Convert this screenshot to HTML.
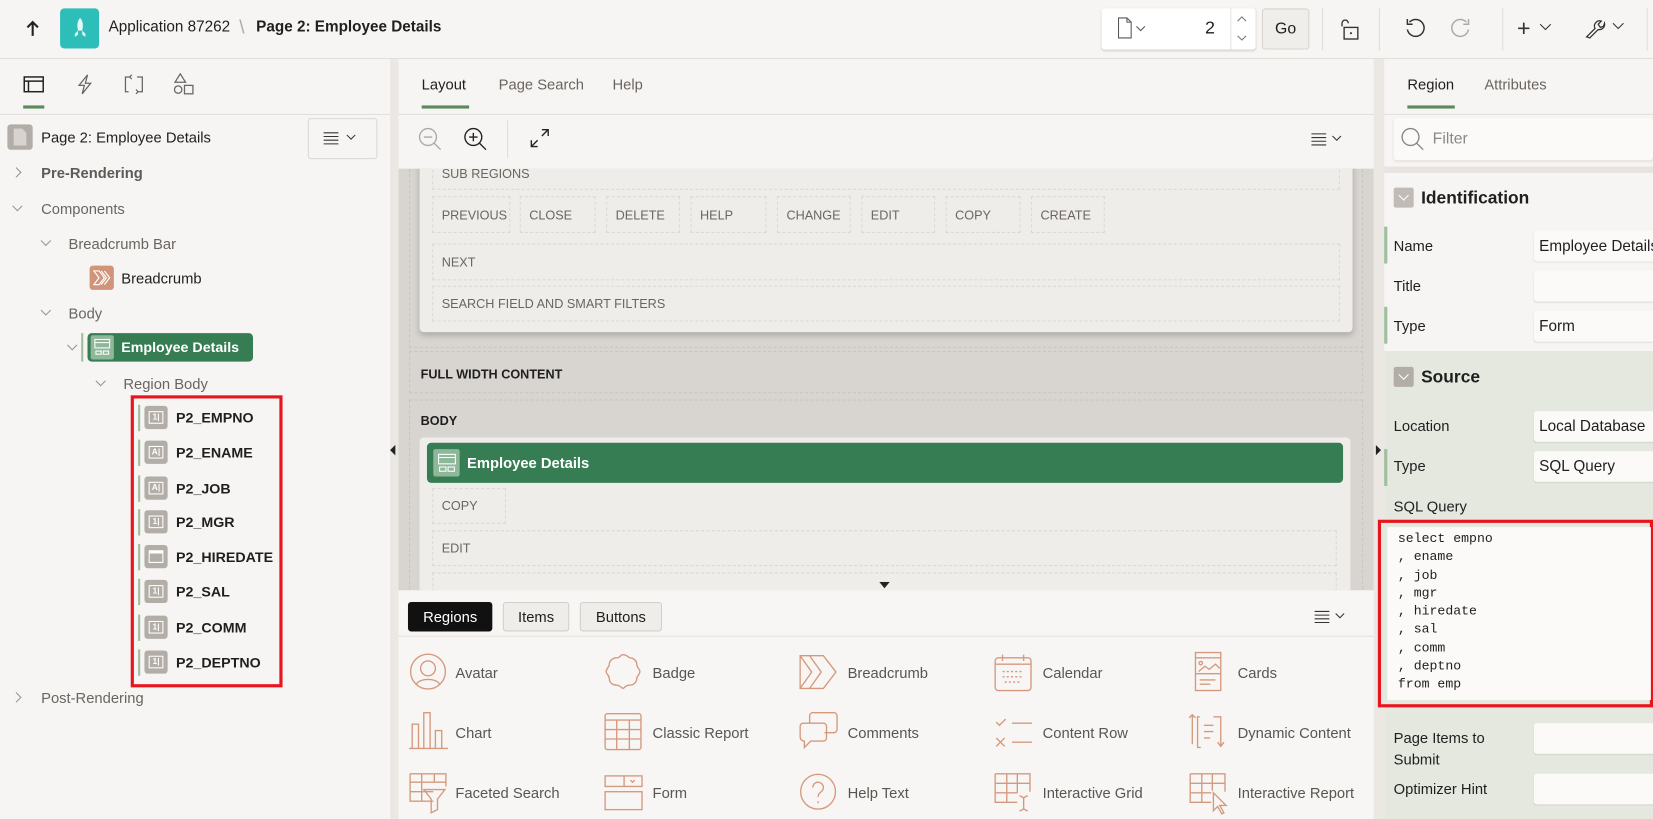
<!DOCTYPE html>
<html><head><meta charset="utf-8"><style>
*{box-sizing:border-box;margin:0;padding:0}
html,body{width:1653px;height:819px;overflow:hidden;background:#f6f5f3}
#w{position:absolute;left:0;top:0;width:1568px;height:777px;transform:scale(1.05421);transform-origin:0 0;font-family:"Liberation Sans",sans-serif;font-size:14px;color:#1f1f1f;background:#f6f5f3;overflow:hidden}
.a{position:absolute}
.t{position:absolute;white-space:nowrap;line-height:1}
.g{color:#6b6560}
.chev{position:absolute;width:7px;height:7px;border-right:1.3px solid #9a948f;border-bottom:1.3px solid #9a948f}
.dn{transform:rotate(45deg)}
.rt{transform:rotate(-45deg)}
.ii{position:absolute;width:22px;height:22px;background:#b3ada7;border-radius:3px}
.ii span{position:absolute;left:4px;top:5px;width:14px;height:12px;border:1.3px solid #fff;color:#fff;font-size:8px;line-height:10px;text-align:center;font-weight:bold}
.bar{position:absolute;width:2px;background:#9fbf9f}
.box{position:absolute;border:1px dashed #dcd8d3;background:#efedea;color:#6b6560;font-size:12px;padding-left:8px;display:flex;align-items:center;white-space:nowrap}
.inp{position:absolute;background:#fbfaf8;border-radius:3px;box-shadow:0 1px 1px rgba(0,0,0,.08);font-size:14.5px;padding-left:5px;display:flex;align-items:center;white-space:nowrap;overflow:hidden}
.gt{position:absolute;font-size:14px;color:#5a5550;white-space:nowrap}
.it{position:absolute;white-space:nowrap;line-height:1;font-size:13.5px;font-weight:bold;left:167px}
svg.s{fill:none;stroke:#d59a7e;stroke-width:1.3}
</style></head><body><div id="w">

<!-- top bar -->
<div class="a" style="left:0;top:0;width:1568px;height:56px;border-bottom:1px solid #e2dfdb;background:#f6f5f3"></div>
<svg class="a" style="left:24px;top:19px" width="14" height="16"><path d="M7 15V2M2 7l5-5 5 5" stroke="#222" stroke-width="2" fill="none"/></svg>
<div class="a" style="left:57px;top:8px;width:37px;height:38px;background:#2dbeb9;border-radius:4px"></div>
<svg class="a" style="left:68px;top:16px" width="16" height="22"><path d="M8 1c3 3 3 8 2 12H6C5 9 5 4 8 1z M6 13l-3 3v3l3-2M10 13l3 3v3l-3-2" fill="#e6f7f6"/></svg>
<div class="t" style="left:103px;top:19px;font-size:14.5px">Application 87262</div>
<div class="t" style="left:227px;top:17px;font-size:18px;color:#aaa">\</div>
<div class="t" style="left:243px;top:19px;font-size:14.5px;font-weight:bold">Page 2: Employee Details</div>

<div class="a" style="left:1045px;top:8px;width:146px;height:39px;background:#fff;border-radius:3px;box-shadow:0 1px 2px rgba(0,0,0,.15)"></div>
<svg class="a" style="left:1060px;top:16px" width="30" height="22"><path d="M1 1h8l4 4v15H1z M9 1v4h4" stroke="#555" fill="none"/><path d="M18 9l4 4 4-4" stroke="#555" fill="none"/></svg>
<div class="t" style="left:1143px;top:18px;font-size:17px">2</div>
<div class="a" style="left:1167px;top:8px;width:1px;height:39px;background:#e5e2de"></div>
<svg class="a" style="left:1171px;top:14px" width="14" height="26"><path d="M3 6l4-4 4 4M3 20l4 4 4-4" stroke="#777" fill="none"/></svg>
<div class="a" style="left:1197px;top:8px;width:45px;height:39px;background:#f0eeeb;border:1px solid #d8d4cf;border-radius:3px;font-size:15px;text-align:center;line-height:37px">Go</div>
<div class="a" style="left:1254px;top:8px;width:1px;height:40px;background:#e0ddd9"></div>
<svg class="a" style="left:1270px;top:16px" width="22" height="24"><path d="M3 9V6a3 3 0 016 0" stroke="#333" fill="none" stroke-width="1.3"/><rect x="5" y="10" width="13" height="11" stroke="#333" fill="none" stroke-width="1.3"/><circle cx="11.5" cy="15.5" r="1" fill="#333"/></svg>
<div class="a" style="left:1308px;top:8px;width:1px;height:40px;background:#e0ddd9"></div>
<svg class="a" style="left:1332px;top:16px" width="22" height="22"><path d="M5 5a8 8 0 11-2 7M3 2v5h5" stroke="#333" fill="none" stroke-width="1.4"/></svg>
<svg class="a" style="left:1374px;top:16px" width="22" height="22"><path d="M17 5a8 8 0 10 2 7M19 2v5h-5" stroke="#aaa" fill="none" stroke-width="1.4"/></svg>
<div class="a" style="left:1425px;top:8px;width:1px;height:40px;background:#e0ddd9"></div>
<div class="t" style="left:1439px;top:16px;font-size:22px;color:#333">+</div>
<svg class="a" style="left:1460px;top:22px" width="12" height="8"><path d="M1 1l5 5 5-5" stroke="#333" fill="none"/></svg>
<svg class="a" style="left:1502px;top:15px" width="40" height="24"><path d="M3 20l8-8a5 5 0 016-7l-3 3 2 3 3-1 1-3a5 5 0 01-6 6l-8 8z" stroke="#333" fill="none" stroke-width="1.2"/><path d="M28 7l5 5 5-5" stroke="#333" fill="none"/></svg>
<div class="a" style="left:1562px;top:8px;width:1px;height:40px;background:#e0ddd9"></div>

<!-- left panel -->
<div class="a" style="left:0;top:108px;width:370px;height:1px;background:#e2dfdb"></div>
<svg class="a" style="left:22px;top:72px" width="20" height="16"><rect x="1" y="1" width="18" height="14" stroke="#222" fill="none" stroke-width="1.4"/><path d="M1 5h18M5 5v10" stroke="#222" stroke-width="1.4"/></svg>
<div class="a" style="left:22px;top:100px;width:20px;height:3px;background:#5b8a5b"></div>
<svg class="a" style="left:72px;top:70px" width="16" height="20"><path d="M11 1L3 11h5l-2 8 8-10H9z" stroke="#666" fill="none" stroke-width="1.2"/></svg>
<svg class="a" style="left:116px;top:70px" width="22" height="20"><path d="M8 3H3v14h3M14 3h5v14h-5M9 1l-2 2 2 2M13 19l2-2-2-2" stroke="#666" fill="none" stroke-width="1.2"/></svg>
<svg class="a" style="left:164px;top:69px" width="22" height="22"><path d="M7 1l5 8H2z" stroke="#666" fill="none" stroke-width="1.2"/><circle cx="5" cy="16" r="3.5" stroke="#666" fill="none" stroke-width="1.2"/><rect x="11" y="12" width="8" height="8" stroke="#666" fill="none" stroke-width="1.2"/></svg>

<div class="a" style="left:7px;top:118px;width:24px;height:24px;background:#b3ada7;border-radius:3px"></div>
<svg class="a" style="left:12px;top:121px" width="14" height="18"><path d="M1 1h8l4 4v12H1z" fill="#d8d3ce"/></svg>
<div class="t" style="left:39px;top:123px;font-size:14px">Page 2: Employee Details</div>
<div class="a" style="left:292px;top:112px;width:66px;height:39px;border:1px solid #dcd8d3;border-radius:3px;background:#f6f5f3"></div>
<svg class="a" style="left:305px;top:124px" width="40" height="14"><path d="M2 2h14M2 5.5h14M2 9h14M2 12.5h14" stroke="#333"/><path d="M24 4l4 4 4-4" stroke="#333" fill="none"/></svg>

<div class="chev rt" style="left:12px;top:160px"></div>
<div class="t" style="left:39px;top:157px;font-size:14px;font-weight:bold;color:#5f5a55">Pre-Rendering</div>
<div class="chev dn" style="left:13px;top:192px"></div>
<div class="t g" style="left:39px;top:191px;font-size:14px">Components</div>
<div class="chev dn" style="left:40px;top:225px"></div>
<div class="t g" style="left:65px;top:224px;font-size:14px">Breadcrumb Bar</div>
<div class="a" style="left:85px;top:252px;width:23px;height:23px;background:#cf9479;border-radius:3px"></div>
<svg class="a" style="left:88px;top:256px" width="18" height="15"><path d="M1 1h5l5 6.5-5 6.5H1l5-6.5zM8 1l5 6.5-5 6.5M11 1l5 6.5-5 6.5" stroke="#fff" fill="none" stroke-width="1.1"/></svg>
<div class="t" style="left:115px;top:257px;font-size:14px">Breadcrumb</div>
<div class="chev dn" style="left:40px;top:291px"></div>
<div class="t g" style="left:65px;top:290px;font-size:14px">Body</div>
<div class="chev dn" style="left:65px;top:324px"></div>
<div class="bar" style="left:77px;top:316px;height:27px"></div>
<div class="a" style="left:83px;top:316px;width:157px;height:27px;background:#377d54;border-radius:4px"></div>
<div class="a" style="left:86px;top:318px;width:22px;height:23px;background:#8fb79a;border-radius:2px"></div>
<svg class="a" style="left:89px;top:321px" width="16" height="17"><rect x="1" y="1" width="14" height="8" stroke="#fff" fill="none"/><path d="M1 4h14" stroke="#fff"/><rect x="2" y="12" width="5" height="3" stroke="#fff" fill="none"/><rect x="9" y="12" width="5" height="3" stroke="#fff" fill="none"/></svg>
<div class="t" style="left:115px;top:323px;font-size:13.5px;font-weight:bold;color:#fff">Employee Details</div>
<div class="chev dn" style="left:92px;top:358px"></div>
<div class="t g" style="left:117px;top:357px;font-size:14px">Region Body</div>

<div class="bar" style="left:131px;top:384px;height:25px"></div><div class="ii" style="left:137px;top:385px"><span>1|</span></div><div class="it" style="top:390px">P2_EMPNO</div>
<div class="bar" style="left:131px;top:417px;height:25px"></div><div class="ii" style="left:137px;top:418px"><span>A|</span></div><div class="it" style="top:423px">P2_ENAME</div>
<div class="bar" style="left:131px;top:451px;height:25px"></div><div class="ii" style="left:137px;top:452px"><span>A|</span></div><div class="it" style="top:457px">P2_JOB</div>
<div class="bar" style="left:131px;top:483px;height:25px"></div><div class="ii" style="left:137px;top:484px"><span>1|</span></div><div class="it" style="top:489px">P2_MGR</div>
<div class="bar" style="left:131px;top:516px;height:25px"></div><div class="ii" style="left:137px;top:517px"><span style="border-top-width:3px"></span></div><div class="it" style="top:522px">P2_HIREDATE</div>
<div class="bar" style="left:131px;top:549px;height:25px"></div><div class="ii" style="left:137px;top:550px"><span>1|</span></div><div class="it" style="top:555px">P2_SAL</div>
<div class="bar" style="left:131px;top:583px;height:25px"></div><div class="ii" style="left:137px;top:584px"><span>1|</span></div><div class="it" style="top:589px">P2_COMM</div>
<div class="bar" style="left:131px;top:616px;height:25px"></div><div class="ii" style="left:137px;top:617px"><span>1|</span></div><div class="it" style="top:622px">P2_DEPTNO</div>
<div class="a" style="left:124px;top:375px;width:144px;height:277px;border:3px solid #e8141e"></div>
<div class="chev rt" style="left:12px;top:658px"></div>
<div class="t g" style="left:39px;top:655px;font-size:14px">Post-Rendering</div>

<!-- dividers -->
<div class="a" style="left:370px;top:56px;width:8px;height:721px;background:#ebe8e4"></div>
<svg class="a" style="left:370px;top:422px" width="6" height="10"><path d="M5 0v10L0 5z" fill="#222"/></svg>
<div class="a" style="left:1303px;top:56px;width:10px;height:721px;background:#ebe8e4"></div>
<svg class="a" style="left:1305px;top:422px" width="6" height="10"><path d="M0 0v10l5-5z" fill="#222"/></svg>

<!-- center -->
<div class="a" style="left:378px;top:108px;width:925px;height:1px;background:#e2dfdb"></div>
<div class="t" style="left:400px;top:73px;font-size:14px">Layout</div>
<div class="a" style="left:400px;top:100px;width:45px;height:3px;background:#5b8a5b"></div>
<div class="t g" style="left:473px;top:73px;font-size:14px">Page Search</div>
<div class="t g" style="left:581px;top:73px;font-size:14px">Help</div>
<svg class="a" style="left:396px;top:120px" width="24" height="24"><circle cx="10" cy="10" r="8" stroke="#aaa" fill="none" stroke-width="1.3"/><path d="M6 10h8M16 16l6 6" stroke="#aaa" stroke-width="1.3"/></svg>
<svg class="a" style="left:439px;top:120px" width="24" height="24"><circle cx="10" cy="10" r="8" stroke="#222" fill="none" stroke-width="1.3"/><path d="M6 10h8M10 6v8M16 16l6 6" stroke="#222" stroke-width="1.3"/></svg>
<div class="a" style="left:481px;top:114px;width:1px;height:36px;background:#e0ddd9"></div>
<svg class="a" style="left:503px;top:122px" width="18" height="18"><path d="M11 1h6v6M17 1l-6 6M7 17H1v-6M1 17l6-6" stroke="#222" fill="none" stroke-width="1.3"/></svg>
<svg class="a" style="left:1242px;top:125px" width="36" height="14"><path d="M2 2h14M2 5.5h14M2 9h14M2 12.5h14" stroke="#333"/><path d="M22 4l4 4 4-4" stroke="#333" fill="none"/></svg>

<div class="a" style="left:378px;top:160px;width:925px;height:400px;background:#d8d4d0;overflow:hidden">
  <div class="a" style="left:10px;top:-20px;width:905px;height:190px;border:1px dashed #c9c5c0"></div>
  <div class="a" style="left:20px;top:-10px;width:885px;height:165px;background:#efedea;border-radius:4px;box-shadow:0 3px 6px rgba(0,0,0,.2)"></div>
  <div class="box" style="left:32px;top:-10px;width:861px;height:30px">SUB REGIONS</div>
  <div class="box" style="left:32px;top:26px;width:74px;height:35px">PREVIOUS</div>
  <div class="box" style="left:115px;top:26px;width:72px;height:35px">CLOSE</div>
  <div class="box" style="left:197px;top:26px;width:70px;height:35px">DELETE</div>
  <div class="box" style="left:277px;top:26px;width:72px;height:35px">HELP</div>
  <div class="box" style="left:359px;top:26px;width:70px;height:35px">CHANGE</div>
  <div class="box" style="left:439px;top:26px;width:70px;height:35px">EDIT</div>
  <div class="box" style="left:519px;top:26px;width:71px;height:35px">COPY</div>
  <div class="box" style="left:600px;top:26px;width:70px;height:35px">CREATE</div>
  <div class="box" style="left:32px;top:71px;width:861px;height:35px">NEXT</div>
  <div class="box" style="left:32px;top:111px;width:861px;height:34px">SEARCH FIELD AND SMART FILTERS</div>
  <div class="a" style="left:10px;top:173px;width:905px;height:40px;border:1px dashed #c9c5c0;font-size:12px;font-weight:bold;padding:14px 0 0 10px">FULL WIDTH CONTENT</div>
  <div class="a" style="left:10px;top:219px;width:905px;height:200px;border:1px dashed #c9c5c0;font-size:12px;font-weight:bold;padding:12px 0 0 10px">BODY</div>
  <div class="a" style="left:20px;top:255px;width:883px;height:160px;background:#efedea;border-radius:4px"></div>
  <div class="a" style="left:27px;top:260px;width:869px;height:38px;background:#377d54;border-radius:4px"></div>
  <div class="a" style="left:33px;top:266px;width:25px;height:26px;background:#8fb79a;border-radius:2px"></div>
  <svg class="a" style="left:37px;top:270px" width="18" height="19"><rect x="1" y="1" width="16" height="9" stroke="#fff" fill="none"/><path d="M1 4h16" stroke="#fff"/><rect x="2" y="13" width="6" height="4" stroke="#fff" fill="none"/><rect x="10" y="13" width="6" height="4" stroke="#fff" fill="none"/></svg>
  <div class="t" style="left:65px;top:272px;font-size:14px;font-weight:bold;color:#fff">Employee Details</div>
  <div class="box" style="left:32px;top:303px;width:70px;height:34px">COPY</div>
  <div class="box" style="left:32px;top:343px;width:858px;height:34px">EDIT</div>
  <div class="box" style="left:32px;top:383px;width:858px;height:34px"></div>
  <svg class="a" style="left:456px;top:392px" width="10" height="6"><path d="M0 0h10L5 6z" fill="#222"/></svg>
</div>

<!-- gallery -->
<div class="a" style="left:378px;top:560px;width:925px;height:217px;background:#f7f6f4"></div>
<div class="a" style="left:387px;top:571px;width:80px;height:28px;background:#111;border-radius:3px;color:#fff;font-size:14px;text-align:center;line-height:28px">Regions</div>
<div class="a" style="left:477px;top:571px;width:63px;height:28px;background:#efedea;border:1px solid #d3cfca;border-radius:3px;font-size:14px;text-align:center;line-height:26px">Items</div>
<div class="a" style="left:550px;top:571px;width:78px;height:28px;background:#efedea;border:1px solid #d3cfca;border-radius:3px;font-size:14px;text-align:center;line-height:26px">Buttons</div>
<svg class="a" style="left:1245px;top:578px" width="36" height="14"><path d="M2 2h14M2 5.5h14M2 9h14M2 12.5h14" stroke="#333"/><path d="M22 4l4 4 4-4" stroke="#333" fill="none"/></svg>
<div class="a" style="left:378px;top:603px;width:925px;height:1px;background:#e4e1dd"></div>

<svg class="a s" style="left:388px;top:619px" width="37" height="37"><circle cx="18" cy="18" r="16.5"/><circle cx="18" cy="15" r="7"/><path d="M7 30c3-6 19-6 22 0"/></svg>
<div class="gt" style="left:432px;top:630px">Avatar</div>
<svg class="a s" style="left:573px;top:619px" width="37" height="37"><path d="M18 2c4 0 5 3 7 3s6 2 6 6 3 4 3 7-3 4-3 7-3 6-7 6-5 3-6 3-3-3-6-3-7-2-7-6-3-4-3-7 3-4 3-7 3-6 7-6 3-3 6-3z"/></svg>
<div class="gt" style="left:619px;top:630px">Badge</div>
<svg class="a s" style="left:758px;top:621px" width="37" height="33"><path d="M1 1h22l12 15.5L23 32H1zM1 1l11 15.5L1 32M10 1l11 15.5L10 32"/></svg>
<div class="gt" style="left:804px;top:630px">Breadcrumb</div>
<svg class="a s" style="left:943px;top:620px" width="37" height="36"><rect x="1" y="4" width="34" height="31" rx="3"/><path d="M1 10h34M8 1v6M28 1v6"/><path d="M8 17h20M8 22h20M10 27h16" stroke-dasharray="2 2"/></svg>
<div class="gt" style="left:989px;top:630px">Calendar</div>
<svg class="a s" style="left:1133px;top:618px" width="26" height="38"><rect x="1" y="1" width="24" height="36"/><path d="M1 6h24M1 21h24M5 27h15M5 31h10"/><circle cx="6" cy="11" r="1.6"/><path d="M4 19l6-5 4 3 6-5 4 4"/></svg>
<div class="gt" style="left:1174px;top:630px">Cards</div>

<svg class="a s" style="left:388px;top:675px" width="37" height="37"><path d="M0 35h37M3 35V12h6v23M14 35V1h6v34M25 35V18h6v17"/></svg>
<div class="gt" style="left:432px;top:687px">Chart</div>
<svg class="a s" style="left:573px;top:676px" width="37" height="36"><rect x="1" y="1" width="34" height="34" rx="2"/><path d="M1 7h34M1 16h34M1 25h34M12 7v28M24 7v28"/></svg>
<div class="gt" style="left:619px;top:687px">Classic Report</div>
<svg class="a s" style="left:758px;top:675px" width="37" height="38"><path d="M10 11V4a3 3 0 013-3h20a3 3 0 013 3v13a3 3 0 01-3 3h-9"/><path d="M4 11h19a3 3 0 013 3v11a3 3 0 01-3 3H11l-6 6v-6a4 4 0 01-4-4V14a3 3 0 013-3z"/></svg>
<div class="gt" style="left:804px;top:687px">Comments</div>
<svg class="a s" style="left:943px;top:679px" width="37" height="30"><path d="M2 6l3 3 6-6M2 21l8 8M10 21l-8 8M17 7h19M17 25h19"/></svg>
<div class="gt" style="left:989px;top:687px">Content Row</div>
<svg class="a s" style="left:1127px;top:676px" width="37" height="36"><path d="M4 30V2M1 5l3-3 3 3M11 4h-2v29h3M24 4h7v28M28 28l3 4 3-4M15 12h9M15 18h9M15 24h6"/></svg>
<div class="gt" style="left:1174px;top:687px">Dynamic Content</div>

<svg class="a s" style="left:388px;top:733px" width="37" height="40"><path d="M1 1h34v12M1 1v26h22M1 9h34M1 18h22M12 1v26M24 1v8M14 16h20l-7 9v10l-6 3V25z"/></svg>
<div class="gt" style="left:432px;top:744px">Faceted Search</div>
<svg class="a s" style="left:573px;top:735px" width="37" height="34"><rect x="1" y="1" width="35" height="10"/><path d="M19 1v10M25 5l2 2 2-2"/><rect x="1" y="16" width="35" height="17"/></svg>
<div class="gt" style="left:619px;top:744px">Form</div>
<svg class="a s" style="left:758px;top:733px" width="37" height="37"><circle cx="18" cy="18" r="16.5"/><path d="M13 14a5 5 0 119 3c-2 2-4 3-4 6M18 27v2"/></svg>
<div class="gt" style="left:804px;top:744px">Help Text</div>
<svg class="a s" style="left:943px;top:733px" width="37" height="40"><path d="M1 1h33v17M1 1v27h21M1 10h33M1 19h21M12 1v27M22 1v18M24 22c2 0 3 1 4 2 1-1 2-2 4-2M28 24v10M24 36c2 0 3-1 4-2 1 1 2 2 4 2"/></svg>
<div class="gt" style="left:989px;top:744px">Interactive Grid</div>
<svg class="a s" style="left:1128px;top:733px" width="40" height="40"><path d="M1 1h33v17M1 1v27h20M1 10h33M1 19h20M12 1v27M22 1v16M23 19v17l4-4 4 7 2-1-4-7h6z"/></svg>
<div class="gt" style="left:1174px;top:744px">Interactive Report</div>

<!-- right panel -->
<div class="a" style="left:1313px;top:108px;width:255px;height:1px;background:#e2dfdb"></div>
<div class="t" style="left:1335px;top:73px;font-size:14px">Region</div>
<div class="a" style="left:1335px;top:100px;width:45px;height:3px;background:#5b8a5b"></div>
<div class="t g" style="left:1408px;top:73px;font-size:14px">Attributes</div>
<div class="a" style="left:1322px;top:112px;width:246px;height:40px;background:#fbfaf8;border-radius:3px;box-shadow:0 1px 2px rgba(0,0,0,.1)"></div>
<svg class="a" style="left:1328px;top:120px" width="24" height="24"><circle cx="10" cy="10" r="8" stroke="#888" fill="none" stroke-width="1.3"/><path d="M16 16l6 6" stroke="#888" stroke-width="1.3"/></svg>
<div class="t" style="left:1359px;top:124px;font-size:15px;color:#888">Filter</div>
<div class="a" style="left:1313px;top:158px;width:255px;height:6px;background:#e7e3df"></div>
<div class="a" style="left:1322px;top:178px;width:19px;height:19px;background:#c0bbb6;border-radius:2px"></div>
<div class="chev dn" style="left:1328px;top:182px;border-color:#fff"></div>
<div class="t" style="left:1348px;top:180px;font-size:16.5px;font-weight:bold">Identification</div>
<div class="bar" style="left:1313px;top:215px;height:35px;width:3px"></div>
<div class="t" style="left:1322px;top:226px;font-size:14px">Name</div>
<div class="inp" style="left:1455px;top:219px;width:120px;height:29px">Employee Details</div>
<div class="t" style="left:1322px;top:264px;font-size:14px">Title</div>
<div class="inp" style="left:1455px;top:257px;width:120px;height:29px"></div>
<div class="bar" style="left:1313px;top:291px;height:35px;width:3px"></div>
<div class="t" style="left:1322px;top:302px;font-size:14px">Type</div>
<div class="inp" style="left:1455px;top:295px;width:120px;height:29px">Form</div>

<div class="a" style="left:1313px;top:333px;width:255px;height:444px;background:#e5e8df"></div>
<div class="a" style="left:1322px;top:348px;width:19px;height:19px;background:#b3ada7;border-radius:2px"></div>
<div class="chev dn" style="left:1328px;top:352px;border-color:#fff"></div>
<div class="t" style="left:1348px;top:350px;font-size:16.5px;font-weight:bold">Source</div>
<div class="t" style="left:1322px;top:397px;font-size:14px">Location</div>
<div class="inp" style="left:1455px;top:390px;width:120px;height:29px">Local Database</div>
<div class="bar" style="left:1313px;top:426px;height:35px;width:3px"></div>
<div class="t" style="left:1322px;top:435px;font-size:14px">Type</div>
<div class="inp" style="left:1455px;top:428px;width:120px;height:29px">SQL Query</div>
<div class="t" style="left:1322px;top:473px;font-size:14px">SQL Query</div>
<div class="a" style="left:1307px;top:493px;width:261px;height:178px;border:3px solid #e8141e;background:#e5e8df"></div>
<div class="a" style="left:1316px;top:500px;width:250px;height:164px;background:#fbfaf8;font-family:'Liberation Mono',monospace;font-size:12.5px;line-height:17.3px;padding:3px 0 0 10px;white-space:pre">select empno
, ename
, job
, mgr
, hiredate
, sal
, comm
, deptno
from emp</div>
<div class="t" style="left:1322px;top:690px;font-size:14px;line-height:20px;white-space:normal;width:110px">Page Items to Submit</div>
<div class="inp" style="left:1455px;top:686px;width:120px;height:29px"></div>
<div class="t" style="left:1322px;top:741px;font-size:14px">Optimizer Hint</div>
<div class="inp" style="left:1455px;top:734px;width:120px;height:29px"></div>

</div></body></html>
